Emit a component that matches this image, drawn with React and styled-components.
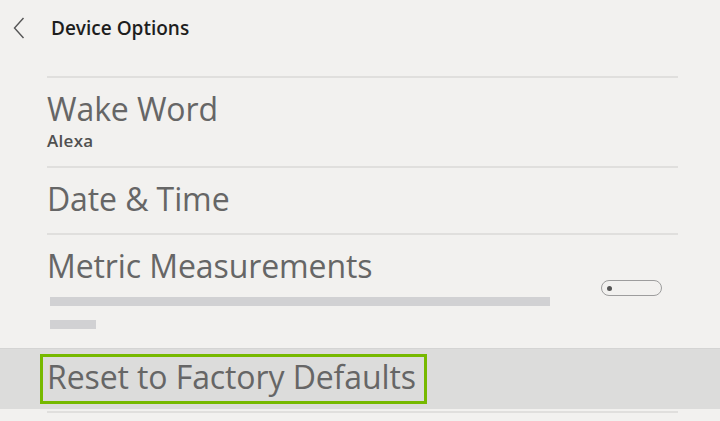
import React from 'react'
import styled, { createGlobalStyle } from 'styled-components'

const GlobalStyle = createGlobalStyle`
  html, body {
    margin: 0;
    padding: 0;
    background: #f2f1ef;
    font-family: "Open Sans", "Liberation Sans", sans-serif;
  }
`

const App = () => {
  return (
    <Page>
      <GlobalStyle />
      <Header>
        <BackButton aria-label="Back">
          <svg width="12" height="22" viewBox="0 0 12 22" fill="none">
            <path d="M10.5 1 L1.5 11 L10.5 21" stroke="#555" strokeWidth="1.4" />
          </svg>
        </BackButton>
        <HeaderTitle>Device Options</HeaderTitle>
      </Header>
      <List>
        <Row $height={90}>
          <RowInner>
            <Label>Wake Word</Label>
            <SubLabel>Alexa</SubLabel>
          </RowInner>
        </Row>
        <Row $height={67}>
          <RowInner>
            <Label>Date &amp; Time</Label>
          </RowInner>
        </Row>
        <Row $height={116}>
          <RowInner>
            <ToggleRow>
              <div>
                <Label>Metric Measurements</Label>
                <Placeholder $width={500} />
                <Placeholder $width={46} $short />
              </div>
              <Toggle>
                <ToggleDot />
              </Toggle>
            </ToggleRow>
          </RowInner>
        </Row>
        <Row $height={61} $active>
          <RowInner $active>
            <Focus>
              <Label>Reset to Factory Defaults</Label>
            </Focus>
          </RowInner>
        </Row>
        <Divider />
      </List>
    </Page>
  )
}

export default App

const Page = styled.div`
  width: 720px;
  height: 421px;
  overflow: hidden;
  background: #f2f1ef;
`

const Header = styled.div`
  display: flex;
  align-items: center;
  height: 56px;
  padding-left: 13px;
  box-sizing: border-box;
`

const BackButton = styled.div`
  display: flex;
  align-items: center;
  width: 38px;
  height: 22px;
`

const HeaderTitle = styled.h1`
  margin: 0;
  font-size: 19px;
  font-weight: 600;
  color: #1e1e1e;
`

const List = styled.div`
  display: flex;
  flex-direction: column;
  padding-top: 19px;
`

const Row = styled.div`
  height: ${p => p.$height}px;
  background: ${p => (p.$active ? '#dcdcdb' : 'transparent')};
  box-sizing: border-box;
  border-top: 1px solid ${p => (p.$active ? '#d4d4d3' : 'transparent')};
`

const RowInner = styled.div`
  margin: 0 42px 0 47px;
  height: 100%;
  box-sizing: border-box;
  border-top: 2px solid ${p => (p.$active ? 'transparent' : '#e0dfdd')};
  padding-top: ${p => (p.$active ? '3px' : '11px')};
`

const Divider = styled.div`
  margin: 2px 42px 0 47px;
  height: 2px;
  background: #e0dfdd;
`

const Label = styled.div`
  font-size: 32px;
  font-weight: 400;
  line-height: 40px;
  color: #666;
  letter-spacing: -0.1px;
  white-space: nowrap;
`

const SubLabel = styled.div`
  font-size: 17px;
  font-weight: 600;
  line-height: 19px;
  letter-spacing: 0.3px;
  color: #505050;
  margin-top: 2px;
`

const ToggleRow = styled.div`
  display: flex;
  justify-content: space-between;
  align-items: flex-start;
`

const Placeholder = styled.div`
  width: ${p => p.$width}px;
  height: 9px;
  margin-left: 3px;
  margin-top: ${p => (p.$short ? '14px' : '11px')};
  background: #d1d1d3;
`

const Toggle = styled.div`
  display: flex;
  align-items: center;
  box-sizing: border-box;
  width: 61px;
  height: 16px;
  margin-top: 34px;
  margin-right: 16px;
  padding: 0 5px;
  border: 1.5px solid #9d9d9d;
  border-radius: 9px;
`

const ToggleDot = styled.div`
  width: 5px;
  height: 5px;
  border-radius: 50%;
  background: #555;
`

const Focus = styled.div`
  display: inline-block;
  margin-left: -7px;
  padding: 0 8px 4px 4px;
  border: 3.5px solid #76b900;
  background: #dcdcdb;
`
